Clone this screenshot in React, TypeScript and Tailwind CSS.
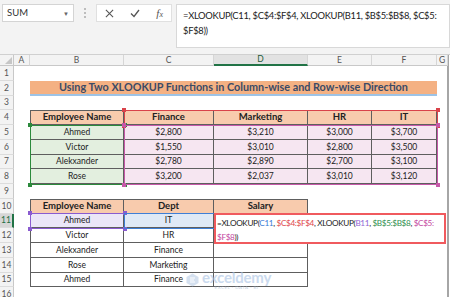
import React from 'react';
import clsx from 'clsx';

const heights = [
  'h-[15px]', 'h-[15px]', 'h-[14px]', 'h-[15px]', 'h-[15px]', 'h-[15px]', 'h-[14px]', 'h-[15px]',
  'h-[15px]', 'h-[15px]', 'h-[14px]', 'h-[15px]', 'h-[15px]', 'h-[15px]', 'h-[14px]', 'h-[15px]',
];

const W = {
  rh: 'w-[14px]',
  A: 'w-[16px]',
  B: 'w-[94px]',
  C: 'w-[90px]',
  D: 'w-[94px]',
  E: 'w-[64px]',
  F: 'w-[65px]',
  G: 'w-[11px]',
};

const t1Head = ['Employee Name', 'Finance', 'Marketing', 'HR', 'IT'];
const t1 = [
  ['Ahmed', '$2,800', '$3,210', '$3,000', '$3,700'],
  ['Victor', '$1,550', '$3,010', '$2,800', '$3,500'],
  ['Alekxander', '$2,780', '$2,890', '$2,700', '$3,100'],
  ['Rose', '$3,200', '$2,037', '$3,010', '$3,120'],
];
const t2 = [
  ['Ahmed', 'IT'],
  ['Victor', 'HR'],
  ['Alekxander', 'Finance'],
  ['Rose', 'Marketing'],
  ['Ahmed', 'Finance'],
];

const t1W = [W.B, W.C, W.D, W.E, W.F];

const Cell = ({ w, className, children }: { w: string; className?: string; children?: React.ReactNode }) => (
  <div className={clsx('shrink-0 h-full flex items-center justify-center whitespace-nowrap', w, className)}>
    {children}
  </div>
);

// coloured range outline Excel draws while a formula is edited
const RefBox = ({ className, color, handles = true }: { className: string; color: string; handles?: boolean }) => (
  <div className={clsx('absolute border-[1.5px]', className)}>
    {handles && (
      <>
        <span className={clsx('absolute -left-[3px] -top-[3px] w-[4px] h-[4px]', color)} />
        <span className={clsx('absolute -right-[3px] -top-[3px] w-[4px] h-[4px]', color)} />
        <span className={clsx('absolute -left-[3px] -bottom-[3px] w-[4px] h-[4px]', color)} />
        <span className={clsx('absolute -right-[3px] -bottom-[3px] w-[4px] h-[4px]', color)} />
      </>
    )}
  </div>
);

const SheetRow = ({ n }: { n: number }) => {
  const active = n === 11;
  let body: React.ReactNode = null;

  if (n === 2) {
    body = (
      <div className="w-[407px] h-full shrink-0 bg-[#f4b183] border-b-2 border-[#9dc3e6] flex items-center justify-center text-[10.8px] font-bold text-[#3b4a66]">
        Using Two XLOOKUP Functions in Column-wise and Row-wise Direction
      </div>
    );
  } else if (n === 4) {
    body = t1Head.map((t, i) => (
      <Cell key={i} w={t1W[i]} className={clsx('bg-[#f8cbad] font-bold text-[9.5px] border-t border-r border-b border-[#5e5e5e]', i === 0 && 'border-l')}>
        {t}
      </Cell>
    ));
  } else if (n >= 5 && n <= 8) {
    body = t1[n - 5].map((t, i) => (
      <Cell key={i} w={t1W[i]} className={clsx('border-r border-b border-[#5e5e5e]', i === 0 ? 'border-l bg-[#e3efdf]' : 'bg-[#f6e6f1]')}>
        {t}
      </Cell>
    ));
  } else if (n === 10) {
    body = ['Employee Name', 'Dept', 'Salary'].map((t, i) => (
      <Cell key={i} w={t1W[i]} className={clsx('bg-[#f8cbad] font-bold text-[9.5px] border-t border-r border-b border-[#5e5e5e]', i === 0 && 'border-l')}>
        {t}
      </Cell>
    ));
  } else if (n >= 11 && n <= 15) {
    const r = t2[n - 11];
    body = (
      <>
        <Cell w={W.B} className={clsx('border-l border-r border-b border-[#5e5e5e]', n === 11 && 'bg-[#ebe6f8]')}>{r[0]}</Cell>
        <Cell w={W.C} className={clsx('border-r border-b border-[#5e5e5e]', n === 11 && 'bg-[#dfe9f6]')}>{r[1]}</Cell>
        <Cell w={W.D} className="border-r border-b border-[#5e5e5e]" />
      </>
    );
  }

  return (
    <div className={clsx('flex shrink-0', heights[n - 1])}>
      <div
        className={clsx(
          'shrink-0 h-full flex items-center justify-center text-[8.5px] border-b border-[#dcdcdc]',
          W.rh,
          active ? 'bg-[#d6d6d6] text-[#1e6e42] border-r-2 border-r-[#217346]' : 'bg-[#f3f3f3] text-[#555] border-r border-r-[#c8c8c8]'
        )}
      >
        {n}
      </div>
      <div className={clsx('shrink-0', W.A)} />
      {body}
    </div>
  );
};

const Formula = () => (
  <>
    =XLOOKUP(<span className="text-[#3b7bd6]">C11</span>, <span className="text-[#e0474c]">$C$4:$F$4</span>, XLOOKUP(
    <span className="text-[#9164d4]">B11</span>, <span className="text-[#2f8f4e]">$B$5:$B$8</span>,{' '}
    <span className="text-[#c4479f]">$C$5:</span>
    <br />
    <span className="text-[#c4479f]">$F$8</span>))
  </>
);

export default function App() {
  const colHeads: [string, string][] = [
    ['A', W.A], ['B', W.B], ['C', W.C], ['D', W.D], ['E', W.E], ['F', W.F], ['G', W.G],
  ];

  return (
    <div className="relative w-[450px] h-[297px] overflow-hidden bg-white font-[Lato,sans-serif] text-[8.5px] text-[#222]">
      {/* formula bar */}
      <div className="h-[55px] bg-[#f3f3f3] border-b border-[#d0d0d0] flex items-start pt-[4px] pl-[2px]">
        <div className="w-[72px] h-[18px] bg-white border border-[#d4d4d4] flex items-center justify-between px-[4px] text-[9.5px] text-[#333]">
          <span>SUM</span>
          <span className="text-[6px] text-[#666]">▼</span>
        </div>
        <div className="w-[22px] h-[18px] flex items-center justify-center">
          <div className="flex flex-col gap-[2px]">
            <span className="w-[2px] h-[2px] bg-[#bdbdbd]" />
            <span className="w-[2px] h-[2px] bg-[#bdbdbd]" />
            <span className="w-[2px] h-[2px] bg-[#bdbdbd]" />
          </div>
        </div>
        <div className="w-[76px] h-[18px] bg-white border border-[#e0e0e0] flex items-center justify-around text-[#555]">
          <svg width="9" height="9" viewBox="0 0 10 10"><path d="M1 1L9 9M9 1L1 9" stroke="#555" strokeWidth="1.2" /></svg>
          <svg width="10" height="9" viewBox="0 0 10 9"><path d="M1 4.5L4 7.5L9 1" stroke="#555" strokeWidth="1.3" fill="none" /></svg>
          <span className="font-['Liberation_Serif',serif] italic text-[11px]">
            f<span className="text-[8px]">x</span>
          </span>
        </div>
        <div className="ml-[4px] flex-1 h-[44px] bg-white border border-[#d8d8d8] pl-[6px] pt-[3px] leading-[15px] text-[9.4px] tracking-[-0.3px] text-[#222] whitespace-nowrap">
          =XLOOKUP(C11, $C$4:$F$4, XLOOKUP(B11, $B$5:$B$8, $C$5:
          <br />
          $F$8))
        </div>
      </div>

      {/* sheet */}
      <div className="w-[449px] border-r-2 border-[#a6a6a6]">
        <div className="flex h-[11px] bg-[#f3f3f3]">
          <div className={clsx('shrink-0 h-full flex items-end justify-end p-[1px] border-r border-b border-[#c8c8c8]', W.rh)}>
            <svg width="7" height="7" viewBox="0 0 7 7"><path d="M7 0L7 7L0 7Z" fill="#c6c6c6" /></svg>
          </div>
          {colHeads.map(([l, w]) => (
            <div
              key={l}
              className={clsx(
                'shrink-0 h-full flex items-center justify-center text-[8.5px] border-r border-[#d6d6d6]',
                w,
                l === 'D' ? 'bg-[#e2e2e2] border-b-2 border-b-[#217346] text-[#1e5c38]' : 'border-b border-b-[#c8c8c8] text-[#555]'
              )}
            >
              {l}
            </div>
          ))}
        </div>
        <div className="flex flex-col">
          {Array.from({ length: 16 }, (_, i) => (
            <SheetRow key={i} n={i + 1} />
          ))}
        </div>
      </div>

      {/* reference highlights */}
      <RefBox className="left-[124px] top-[110px] w-[314px] h-[16px] border-[#d9434a]" color="bg-[#d9434a]" />
      <RefBox className="left-[30px] top-[125px] w-[95px] h-[60px] border-[#2c8a3c]" color="bg-[#2c8a3c]" />
      <RefBox className="left-[124px] top-[125px] w-[314px] h-[60px] border-[#c659a9]" color="bg-[#c659a9]" />
      <RefBox className="left-[30px] top-[213px] w-[95px] h-[16px] border-[#8a5bd0]" color="bg-[#8a5bd0]" />
      <RefBox className="left-[124px] top-[213px] w-[91px] h-[16px] border-[#3f7fd6]" color="bg-[#3f7fd6]" handles={false} />

      {/* in-cell edit box */}
      <div className="absolute left-[214px] top-[213px] w-[232px] h-[31px] bg-white border-2 border-[#f05a5e] pl-[1px] pt-[1px] leading-[14px] text-[8.2px] tracking-[-0.35px] text-[#222] whitespace-nowrap">
        <Formula />
      </div>

      {/* watermark */}
      <div className="absolute left-[186px] top-[270px] flex items-center gap-[3px] opacity-60">
        <svg width="13" height="14" viewBox="0 0 13 14">
          <path d="M6.5 0.5L12.5 4V10L6.5 13.5L0.5 10V4Z" fill="#b9cde6" />
          <path d="M4 5H9M4 7H8M4 9H9" stroke="#fff" strokeWidth="1.2" />
        </svg>
        <div className="flex flex-col items-center leading-none">
          <span className="text-[15px] font-bold text-[#a8c2e4] tracking-[-0.2px]">exceldemy</span>
          <span className="text-[4.5px] text-[#9fb3cc] tracking-[0.5px] mt-[1px]">EXCEL · DATA · BI</span>
        </div>
      </div>
    </div>
  );
}
